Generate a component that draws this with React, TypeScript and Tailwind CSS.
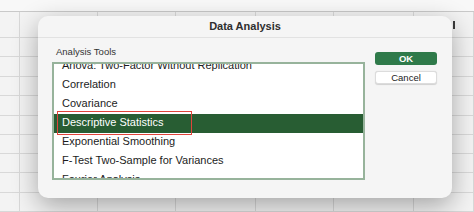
const cols = ["w-[20px]", "w-[78px]", "w-[78px]", "w-[80px]", "w-[78px]", "w-[80px]", "w-[60px]"];
const rows = ["h-[26px]", "h-[19px]", "h-[20px]", "h-[19px]", "h-[20px]", "h-[19px]", "h-[19px]", "h-[19px]", "h-[20px]", "h-[19px]"];

const tools = [
  "Anova: Two-Factor Without Replication",
  "Correlation",
  "Covariance",
  "Descriptive Statistics",
  "Exponential Smoothing",
  "F-Test Two-Sample for Variances",
  "Fourier Analysis",
];

export default function App() {
  return (
    <div
      className="relative w-[474px] h-[212px] overflow-hidden bg-[#f3f3f3]"
      style={{ fontFamily: '"Liberation Sans", Arial, sans-serif' }}
    >
      {/* spreadsheet behind the dialog */}
      <div className="h-[12px] bg-[#f8f8f8] border-b border-[#c9c9c9]" />
      {rows.map((h, r) => (
        <div key={r} className={`flex ${h} border-b border-[#d8d8d8]`}>
          {cols.map((w, c) => (
            <div key={c} className={`${w} shrink-0 border-r border-[#d8d8d8]`} />
          ))}
        </div>
      ))}
      <div className="absolute left-[453px] top-[21px] w-[2px] h-[8px] bg-[#3a3a3a]" />

      {/* dialog */}
      <div className="absolute left-[38px] top-[16px] w-[414px] h-[182px] rounded-[10px] bg-[#f5f5f5] shadow-[0_8px_26px_rgba(0,0,0,0.32)] flex flex-col">
        <div className="h-[22px] shrink-0 border-b border-[#e2e2e2] flex items-center justify-center text-[11px] font-bold text-[#2e2e2e]">
          Data Analysis
        </div>
        <div className="flex pl-[14px]">
          <div className="flex flex-col pt-[8px]">
            <div className="pl-[4px] h-[16px] leading-[12px] text-[9.5px] text-[#333]">Analysis Tools</div>
            <div className="relative w-[313px] h-[118px] border-2 border-[#97b39b] bg-white overflow-hidden">
              <div className="-mt-[7px]">
                {tools.map((t) => (
                  <div
                    key={t}
                    className={`h-[19px] pl-[8px] pb-[3px] flex items-center text-[11px] whitespace-nowrap ${
                      t === "Descriptive Statistics" ? "bg-[#285d33] text-white" : "text-[#1c1c1c]"
                    }`}
                  >
                    {t}
                  </div>
                ))}
              </div>
            </div>
          </div>
          <div className="flex flex-col pt-[14px] pl-[10px] gap-[6px]">
            <button className="w-[62px] h-[13px] rounded-[3px] bg-[#2f7a4a] text-white text-[9.5px] font-semibold leading-none flex items-center justify-center">
              OK
            </button>
            <button className="w-[62px] h-[13px] rounded-[3px] bg-white border border-[#dcdcdc] shadow-[0_0.5px_1px_rgba(0,0,0,0.15)] text-[#222] text-[9.5px] leading-none flex items-center justify-center">
              Cancel
            </button>
          </div>
        </div>
      </div>

      {/* red annotation box */}
      <div className="absolute left-[57px] top-[111px] w-[135px] h-[24px] border-[1.5px] border-[#e0443b]" />
    </div>
  );
}
